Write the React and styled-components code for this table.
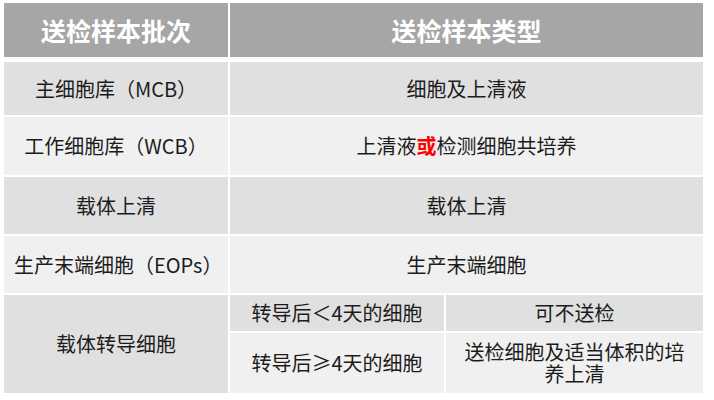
import React from "react";
import styled, { createGlobalStyle } from "styled-components";

const Global = createGlobalStyle`
  html, body { margin: 0; padding: 0; background: #ffffff; }
  body { font-family: "Noto Sans CJK SC", "Noto Sans", sans-serif; }
`;

const Page = styled.div`
  width: 714px;
  height: 400px;
  padding: 3px 0 0 4px;
  box-sizing: border-box;
  display: flex;
  flex-direction: column;
  gap: 5px;
`;

const HeaderRow = styled.div`
  display: grid;
  grid-template-columns: 224px 473px;
  column-gap: 2px;
  height: 54px;
`;

const HeaderCell = styled.div`
  background: #a6a6a6;
  color: #ffffff;
  font-size: 25px;
  font-weight: 700;
  display: flex;
  align-items: center;
  justify-content: center;
  letter-spacing: 0;
`;

const Body = styled.div`
  display: grid;
  grid-template-columns: 224px 473px;
  grid-template-rows: 53px 58px 57px 57px 98px;
  gap: 2px;
`;

const Cell = styled.div`
  background: ${(p) => (p.$tone === "dark" ? "#e0e0e0" : "#f0f0f0")};
  color: #1c1c1c;
  font-size: 20px;
  line-height: 22px;
  display: flex;
  align-items: center;
  justify-content: center;
  text-align: center;
  padding: 0 10px;
  box-sizing: border-box;
`;

const SubGrid = styled.div`
  display: grid;
  grid-template-columns: 214px 257px;
  grid-template-rows: 36px 60px;
  gap: 2px;
`;

const Or = styled.span`
  color: #ff0000;
  font-weight: 700;
`;

const rows = [
  { tone: "dark", a: "主细胞库（MCB）", b: "细胞及上清液" },
  { tone: "light", a: "工作细胞库（WCB）", b: <>上清液<Or>或</Or>检测细胞共培养</> },
  { tone: "dark", a: "载体上清", b: "载体上清" },
  { tone: "light", a: "生产末端细胞（EOPs）", b: "生产末端细胞" },
];

export default function App() {
  return (
    <>
      <Global />
      <Page>
        <HeaderRow>
          <HeaderCell>送检样本批次</HeaderCell>
          <HeaderCell>送检样本类型</HeaderCell>
        </HeaderRow>
        <Body>
          {rows.map((r, i) => (
            <React.Fragment key={i}>
              <Cell $tone={r.tone}>{r.a}</Cell>
              <Cell $tone={r.tone}>{r.b}</Cell>
            </React.Fragment>
          ))}
          <Cell $tone="dark">载体转导细胞</Cell>
          <SubGrid>
            <Cell $tone="dark">转导后＜4天的细胞</Cell>
            <Cell $tone="dark">可不送检</Cell>
            <Cell $tone="light">转导后≥4天的细胞</Cell>
            <Cell $tone="light">送检细胞及适当体积的培养上清</Cell>
          </SubGrid>
        </Body>
      </Page>
    </>
  );
}
